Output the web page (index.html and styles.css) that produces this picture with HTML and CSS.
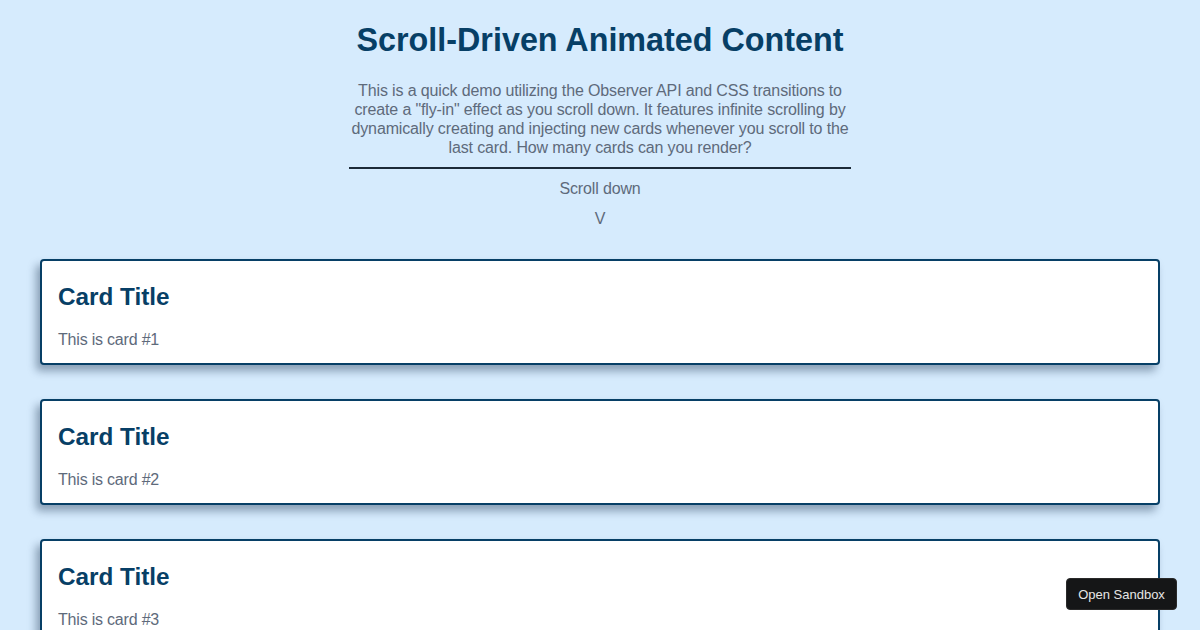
FILE: index.html
```html
<!DOCTYPE html>
<html lang="en">
<head>
<meta charset="utf-8">
<title>Scroll-Driven Animated Content</title>
<link rel="stylesheet" href="styles.css">
</head>
<body>
<header class="intro">
  <h1 class="intro-title">Scroll-Driven Animated Content</h1>
  <p class="intro-text">This is a quick demo utilizing the Observer API and CSS transitions to create a "fly-in" effect as you scroll down. It features infinite scrolling by dynamically creating and injecting new cards whenever you scroll to the last card. How many cards can you render?</p>
  <hr class="intro-rule">
  <p class="intro-hint">Scroll down</p>
  <p class="intro-arrow">V</p>
</header>
<main class="cards">
  <div class="card">
    <h2 class="card-title">Card Title</h2>
    <p class="card-text">This is card #1</p>
  </div>
  <div class="card">
    <h2 class="card-title">Card Title</h2>
    <p class="card-text">This is card #2</p>
  </div>
  <div class="card">
    <h2 class="card-title">Card Title</h2>
    <p class="card-text">This is card #3</p>
  </div>
</main>
<a class="sandbox-btn" href="#">Open Sandbox</a>
</body>
</html>
```

FILE: styles.css
```css
* { box-sizing: border-box; }
html, body { height: 100%; }
body {
  margin: 0;
  background: #d6ebfd;
  font-family: "Liberation Sans", Arial, sans-serif;
  color: #5e6a7b;
  overflow: hidden;
}
.intro {
  width: 502px;
  margin: 0 auto;
  padding-top: 22px;
  text-align: center;
}
.intro-title {
  margin: 0 0 22px;
  font-size: 32.3px;
  line-height: 37px;
  color: #073f66;
  font-weight: bold;
}
.intro-text {
  margin: 0;
  font-size: 16px;
  line-height: 19px;
  letter-spacing: -0.14px;
}
.intro-rule {
  margin: 10px 0 10px;
  border: 0;
  border-top: 2px solid #1c2a38;
  height: 0;
}
.intro-hint, .intro-arrow {
  margin: 0;
  font-size: 16px;
  line-height: 19px;
  letter-spacing: -0.14px;
}
.intro-arrow { margin-top: 11px; }
.cards {
  display: flex;
  flex-direction: column;
  gap: 34px;
  padding: 31px 40px 0;
}
.card {
  background: #fff;
  border: 2px solid #073f66;
  border-radius: 4px;
  padding: 22px 16px 16px;
  box-shadow: -4px 6px 8px rgba(20, 45, 75, 0.4);
  height: 106px;
  flex-shrink: 0;
}
.card-title {
  margin: 0 0 20px;
  font-size: 24.3px;
  line-height: 28px;
  color: #073f66;
}
.card-text {
  margin: 0;
  font-size: 16px;
  line-height: 18px;
  letter-spacing: -0.2px;
}
.sandbox-btn {
  position: fixed;
  right: 23px;
  bottom: 20px;
  width: 111px;
  height: 32px;
  display: flex;
  align-items: center;
  justify-content: center;
  background: #151617;
  color: #e6e6e6;
  border: 1px solid #2a2a2a;
  border-radius: 4px;
  font-size: 13px;
  text-decoration: none;
}
```
